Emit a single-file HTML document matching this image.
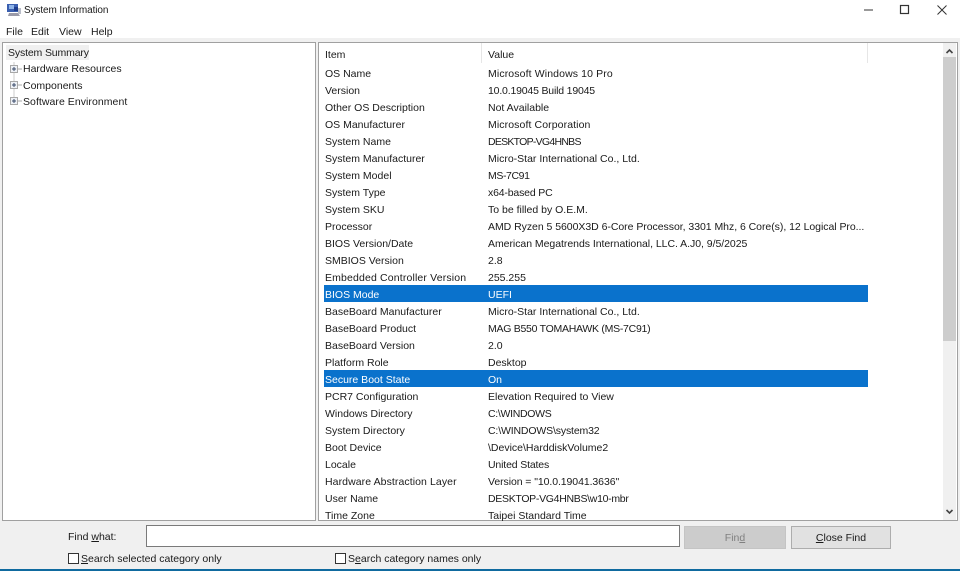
<!DOCTYPE html>
<html><head><meta charset="utf-8"><style>
html,body{margin:0;padding:0;background:#fff}
#r{position:relative;width:960px;height:571px;overflow:hidden;background:#fff;font-family:"Liberation Sans",sans-serif;font-size:10.5px;letter-spacing:0;color:#1a1a1a;filter:blur(.3px)}
#r div{position:absolute;white-space:nowrap}
.t{line-height:14px;height:14px;margin-top:1px}
.a{left:325px}.b{left:488px}
.sel{background:#0a72cc;left:324px;width:544px;height:17px}
.w{color:#fff}
u{text-decoration-thickness:1px}
</style></head><body><div id="r">
<svg style="position:absolute;left:6px;top:3px" width="16" height="15" viewBox="0 0 16 15"><rect x="1" y="1" width="11" height="8" fill="#3a5fb0"/><rect x="3" y="2" width="5" height="4" fill="#8fb4e8"/><path d="M8 4h4v4H8z" fill="#1c3c8c"/><path d="M3 10h9l2 3H2z" fill="#9a9aa8"/><rect x="12" y="5" width="3" height="6" fill="#b8bcc8"/></svg>
<div class="t" style="left:24px;top:3px;font-size:10px;letter-spacing:-.1px">System Information</div>
<div class="t" style="left:6px;top:24px">File</div>
<div class="t" style="left:31px;top:24px">Edit</div>
<div class="t" style="left:59px;top:24px">View</div>
<div class="t" style="left:91px;top:24px">Help</div>
<svg style="position:absolute;left:860px;top:0" width="100" height="20" viewBox="0 0 100 20" fill="none" stroke="#333" stroke-width="1"><path d="M4 10h9"/><rect x="40.5" y="5.5" width="8" height="8" stroke-width="1.2"/><path d="M77.5 5.5l9 9M86.5 5.5l-9 9"/></svg>
<div style="left:0;top:38px;width:960px;height:533px;background:#f0f0f0"></div>
<div style="left:2px;top:42px;width:312px;height:477px;background:#fff;border:1px solid #a0a0a0"></div>
<div style="left:318px;top:42px;width:638px;height:477px;background:#fff;border:1px solid #a0a0a0"></div>
<div style="left:6px;top:45px;width:83px;height:15px;background:#f0f0f0"></div>
<div class="t" style="left:8px;top:44.5px;letter-spacing:-.14px">System Summary</div>
<div class="t" style="left:23px;top:60.5px">Hardware Resources</div>
<div class="t" style="left:23px;top:77.5px">Components</div>
<div class="t" style="left:23px;top:93.5px;letter-spacing:.05px">Software Environment</div>
<svg style="position:absolute;left:9px;top:62px" width="14" height="48" viewBox="0 0 14 48"><g fill="#eef1f6" stroke="#a8a8a8"><rect x="1.5" y="3.5" width="7" height="7"/><rect x="1.5" y="19.5" width="7" height="7"/><rect x="1.5" y="35.5" width="7" height="7"/></g><path d="M3 7h4M5 5v4M3 23h4M5 21v4M3 39h4M5 37v4" stroke="#3a4a6a"/><path d="M9 7h4M9 23h4M9 39h4" stroke="#aaa"/><path d="M5 0v3M5 11v8M5 27v8" stroke="#ccc"/></svg>
<div class="t" style="left:325px;top:47px">Item</div>
<div class="t" style="left:488px;top:47px">Value</div>
<div style="left:481px;top:43px;width:1px;height:20px;background:#e6e6e6"></div>
<div style="left:867px;top:43px;width:1px;height:20px;background:#e6e6e6"></div>
<div class="sel" style="top:285px"></div>
<div class="sel" style="top:370px"></div>
<div class="t a" style="top:66px">OS Name</div><div class="t b" style="top:66px;letter-spacing:.12px">Microsoft Windows 10 Pro</div>
<div class="t a" style="top:83px">Version</div><div class="t b" style="top:83px;letter-spacing:-.18px">10.0.19045 Build 19045</div>
<div class="t a" style="top:100px">Other OS Description</div><div class="t b" style="top:100px">Not Available</div>
<div class="t a" style="top:117px">OS Manufacturer</div><div class="t b" style="top:117px;letter-spacing:.1px">Microsoft Corporation</div>
<div class="t a" style="top:134px">System Name</div><div class="t b" style="top:134px;letter-spacing:-.73px">DESKTOP-VG4HNBS</div>
<div class="t a" style="top:151px">System Manufacturer</div><div class="t b" style="top:151px">Micro-Star International Co., Ltd.</div>
<div class="t a" style="top:168px">System Model</div><div class="t b" style="top:168px;letter-spacing:-.4px">MS-7C91</div>
<div class="t a" style="top:185px">System Type</div><div class="t b" style="top:185px;letter-spacing:-.17px">x64-based PC</div>
<div class="t a" style="top:202px">System SKU</div><div class="t b" style="top:202px">To be filled by O.E.M.</div>
<div class="t a" style="top:219px">Processor</div><div class="t b" style="top:219px;letter-spacing:-.04px">AMD Ryzen 5 5600X3D 6-Core Processor, 3301 Mhz, 6 Core(s), 12 Logical Pro...</div>
<div class="t a" style="top:236px">BIOS Version/Date</div><div class="t b" style="top:236px;letter-spacing:-.04px">American Megatrends International, LLC. A.J0, 9/5/2025</div>
<div class="t a" style="top:253px">SMBIOS Version</div><div class="t b" style="top:253px">2.8</div>
<div class="t a" style="top:270px;letter-spacing:.15px">Embedded Controller Version</div><div class="t b" style="top:270px">255.255</div>
<div class="t a w" style="top:287px">BIOS Mode</div><div class="t b w" style="top:287px">UEFI</div>
<div class="t a" style="top:304px">BaseBoard Manufacturer</div><div class="t b" style="top:304px">Micro-Star International Co., Ltd.</div>
<div class="t a" style="top:321px">BaseBoard Product</div><div class="t b" style="top:321px;letter-spacing:-.27px">MAG B550 TOMAHAWK (MS-7C91)</div>
<div class="t a" style="top:338px">BaseBoard Version</div><div class="t b" style="top:338px">2.0</div>
<div class="t a" style="top:355px">Platform Role</div><div class="t b" style="top:355px">Desktop</div>
<div class="t a w" style="top:372px">Secure Boot State</div><div class="t b w" style="top:372px">On</div>
<div class="t a" style="top:389px">PCR7 Configuration</div><div class="t b" style="top:389px">Elevation Required to View</div>
<div class="t a" style="top:406px">Windows Directory</div><div class="t b" style="top:406px;letter-spacing:-.3px">C:\WINDOWS</div>
<div class="t a" style="top:423px">System Directory</div><div class="t b" style="top:423px;letter-spacing:-.15px">C:\WINDOWS\system32</div>
<div class="t a" style="top:440px">Boot Device</div><div class="t b" style="top:440px">\Device\HarddiskVolume2</div>
<div class="t a" style="top:457px">Locale</div><div class="t b" style="top:457px;letter-spacing:-.15px">United States</div>
<div class="t a" style="top:474px;letter-spacing:.08px">Hardware Abstraction Layer</div><div class="t b" style="top:474px;letter-spacing:-.08px">Version = "10.0.19041.3636"</div>
<div class="t a" style="top:491px">User Name</div><div class="t b" style="top:491px;letter-spacing:-.3px">DESKTOP-VG4HNBS\w10-mbr</div>
<div class="t a" style="top:508px">Time Zone</div><div class="t b" style="top:508px">Taipei Standard Time</div>
<div style="left:943px;top:43px;width:13px;height:477px;background:#f0f0f0"></div>
<div style="left:943px;top:57px;width:13px;height:284px;background:#cdcdcd"></div>
<svg style="position:absolute;left:943px;top:43px" width="13" height="477" viewBox="0 0 13 477" fill="none" stroke="#444" stroke-width="1.6"><path d="M3.5 10l3-3 3 3"/><path d="M3.5 467l3 3 3-3"/></svg>
<div class="t" style="left:68px;top:529px">Find <u>w</u>hat:</div>
<div style="left:146px;top:525px;width:532px;height:20px;background:#fff;border:1px solid #7a7a7a"></div>
<div style="left:684px;top:526px;width:100px;height:21px;background:#cccccc;border:1px solid #c4c4c4"></div>
<div class="t" style="left:684px;top:530px;width:102px;text-align:center;color:#808080">Fin<u>d</u></div>
<div style="left:791px;top:526px;width:98px;height:21px;background:#e1e1e1;border:1px solid #adadad"></div>
<div class="t" style="left:791px;top:530px;width:100px;text-align:center"><u>C</u>lose Find</div>
<div style="left:68px;top:553px;width:9px;height:9px;background:#fff;border:1px solid #333"></div>
<div class="t" style="left:81px;top:551px"><u>S</u>earch selected category only</div>
<div style="left:335px;top:553px;width:9px;height:9px;background:#fff;border:1px solid #333"></div>
<div class="t" style="left:348px;top:551px">S<u>e</u>arch category names only</div>
<div style="left:0;top:569px;width:960px;height:2px;background:#0f6a9f"></div>
</div></body></html>
